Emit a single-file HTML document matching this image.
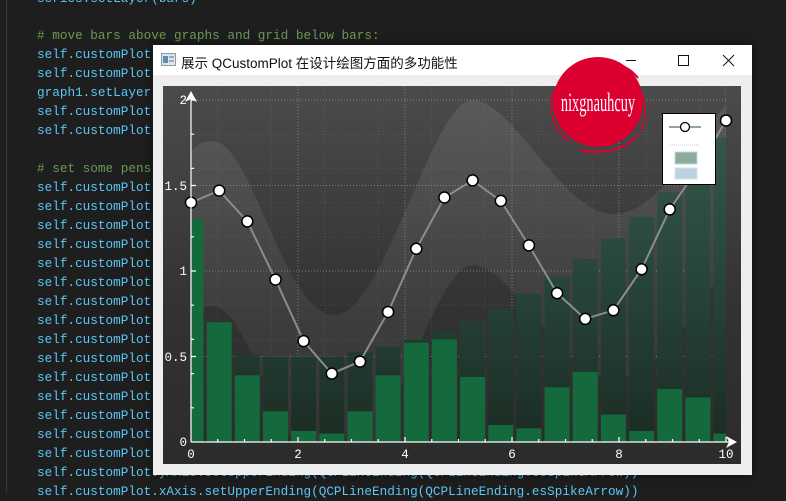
<!DOCTYPE html>
<html><head><meta charset="utf-8"><style>
html,body{margin:0;padding:0;}
body{width:786px;height:492px;background:#1e1e1e;position:relative;overflow:hidden;font-family:"Liberation Sans","Noto Sans CJK SC",sans-serif;}
.code{position:absolute;left:37px;font-family:"Liberation Mono",monospace;font-size:12.7px;line-height:19px;color:#5cc6f5;white-space:pre;}
.c{color:#6a9955}
.gut{position:absolute;left:6px;top:0;width:1px;height:492px;background:#3a3a3a}
.win{position:absolute;left:153px;top:45px;width:599px;height:430px;background:#eeeeee;box-shadow:0 0 8px rgba(0,0,0,.6)}
.tb{position:absolute;left:0;top:0;width:599px;height:30px;background:#fff}
.title{position:absolute;left:28px;top:7px;font-size:13.5px;color:#111}
</style></head><body>
<div class="gut"></div>
<div class="code" style="top:-11px">series.setLayer(bars)</div>
<div class="code" style="top:26px"><span class="c"># move bars above graphs and grid below bars:</span>
self.customPlot
self.customPlot
graph1.setLayer
self.customPlot
self.customPlot

<span class="c"># set some pens</span>
self.customPlot
self.customPlot
self.customPlot
self.customPlot
self.customPlot
self.customPlot
self.customPlot
self.customPlot
self.customPlot
self.customPlot
self.customPlot
self.customPlot
self.customPlot
self.customPlot
self.customPlot
self.customPlot.yAxis.setUpperEnding(QCPLineEnding(QCPLineEnding.esSpikeArrow))
self.customPlot.xAxis.setUpperEnding(QCPLineEnding(QCPLineEnding.esSpikeArrow))</div>

<div class="win">
 <div class="tb">
  <svg style="position:absolute;left:8px;top:8px" width="15" height="13"><rect x="0.5" y="0.5" width="14" height="12" fill="#dfe6ea" stroke="#8a9aa6"/><rect x="2" y="3" width="5" height="7" fill="#5b8fb0"/><rect x="8" y="3" width="5" height="2" fill="#9ab"/><rect x="8" y="7" width="5" height="2" fill="#9ab"/></svg>
  <div class="title">展示 QCustomPlot 在设计绘图方面的多功能性</div>
  <svg style="position:absolute;left:470px;top:8px" width="120" height="16">
   <line x1="3" y1="7.5" x2="13" y2="7.5" stroke="#111" stroke-width="1"/>
   <rect x="55.5" y="2.5" width="10" height="10" fill="none" stroke="#111"/>
   <line x1="100" y1="2" x2="111" y2="13" stroke="#111"/><line x1="111" y1="2" x2="100" y2="13" stroke="#111"/>
  </svg>
 </div>
</div>

<svg style="position:absolute;left:163px;top:86px" width="578" height="378" font-family="Liberation Mono, monospace" font-size="12.5">
<defs>
 <linearGradient id="bg" x1="0" y1="0" x2="0" y2="1"><stop offset="0" stop-color="#4b4b4b"/><stop offset="0.6" stop-color="#323232"/><stop offset="1" stop-color="#2c2c2c"/></linearGradient>
 <linearGradient id="bb" gradientUnits="userSpaceOnUse" x1="0" y1="40" x2="0" y2="356"><stop offset="0" stop-color="#36584a"/><stop offset="0.5" stop-color="#27443a"/><stop offset="1" stop-color="#1b2c23"/></linearGradient>
 <linearGradient id="bd" x1="0" y1="0" x2="0" y2="1"><stop offset="0" stop-color="#fff" stop-opacity="0.09"/><stop offset="1" stop-color="#fff" stop-opacity="0.03"/></linearGradient>
 <clipPath id="cp"><rect x="28" y="0" width="535" height="356"/></clipPath>
</defs>
<rect width="578" height="378" fill="url(#bg)"/>
<g clip-path="url(#cp)">
<path d="M28,65 C35,58 40,55 49,55 C90,55 120,229 172,229 C220,229 270,14 309,14 C350,14 400,128 450,128 C500,128 540,40 563,20 L563,185 C540,205 500,293 450,293 C400,293 350,179 309,179 C270,179 220,394 172,394 C120,394 90,220 49,220 C40,220 35,223 28,230 Z" fill="url(#bd)"/>
<g stroke="#8a8a8a" stroke-opacity="0.25" stroke-dasharray="1,2">
<path d="M54.75,0V356M108.25,0V356M161.75,0V356M215.25,0V356M268.75,0V356M322.25,0V356M375.75,0V356M429.25,0V356M482.75,0V356M536.25,0V356M28,48.2H563M28,82.4H563M28,116.6H563M28,150.8H563M28,219.2H563M28,253.4H563M28,287.6H563M28,321.8H563"/>
</g>
<g stroke="#aaaaaa" stroke-opacity="0.6" stroke-dasharray="1,2">
<path d="M135,0V356M242,0V356M349,0V356M456,0V356M563,0V356M28,14H563M28,99.5H563M28,185H563M28,270.5H563"/>
</g>
<g fill="url(#bb)">
<rect x="15.5" y="270.5" width="25" height="86"/><rect x="43.7" y="270.5" width="25" height="86"/><rect x="71.8" y="268.8" width="25" height="88"/><rect x="100" y="270.5" width="25" height="86"/><rect x="128.1" y="270.5" width="25" height="86"/><rect x="156.3" y="270.5" width="25" height="86"/><rect x="184.5" y="266.2" width="25" height="90"/><rect x="212.6" y="261.1" width="25" height="95"/><rect x="240.8" y="253.4" width="25" height="103"/><rect x="268.9" y="245.5" width="25" height="111"/><rect x="297.1" y="235.3" width="25" height="121"/><rect x="325.3" y="222.6" width="25" height="134"/><rect x="353.4" y="207.9" width="25" height="149"/><rect x="381.6" y="190.6" width="25" height="166"/><rect x="409.7" y="173" width="25" height="183"/><rect x="437.9" y="152.5" width="25" height="204"/><rect x="466.1" y="130.8" width="25" height="226"/><rect x="494.2" y="106.3" width="25" height="250"/><rect x="522.4" y="82.4" width="25" height="274"/><rect x="550.5" y="51.6" width="25" height="305"/>
</g>
<g fill="#156a3d">
<rect x="15.5" y="133.7" width="25" height="222.3"/><rect x="43.7" y="236.3" width="25" height="119.7"/><rect x="71.8" y="289.3" width="25" height="66.7"/><rect x="100" y="325.2" width="25" height="30.8"/><rect x="128.1" y="344.9" width="25" height="11.1"/><rect x="156.3" y="347.5" width="25" height="8.5"/><rect x="184.5" y="325.2" width="25" height="30.8"/><rect x="212.6" y="289.3" width="25" height="66.7"/><rect x="240.8" y="256.8" width="25" height="99.2"/><rect x="268.9" y="253.4" width="25" height="102.6"/><rect x="297.1" y="291" width="25" height="65"/><rect x="325.3" y="338.9" width="25" height="17.1"/><rect x="353.4" y="342.3" width="25" height="13.7"/><rect x="381.6" y="301.3" width="25" height="54.7"/><rect x="409.7" y="285.9" width="25" height="70.1"/><rect x="437.9" y="328.6" width="25" height="27.4"/><rect x="466.1" y="344.9" width="25" height="11.1"/><rect x="494.2" y="303" width="25" height="53"/><rect x="522.4" y="311.5" width="25" height="44.5"/><rect x="550.5" y="347.5" width="25" height="8.5"/>
</g>
</g>
<polyline fill="none" stroke="#8c8c8c" stroke-width="2" points="28,116.6 56.2,104.6 84.3,135.4 112.5,193.6 140.6,255.1 168.8,287.6 197,275.6 225.1,226 253.3,162.8 281.4,111.5 309.6,94.4 337.8,114.9 365.9,159.4 394.1,207.2 422.2,232.9 450.4,224.3 478.6,183.3 506.7,123.4 534.9,82.4 563,34.5"/>
<g fill="#fff" stroke="#000" stroke-width="1.5">
<circle cx="28" cy="116.6" r="5.5"/><circle cx="56.2" cy="104.6" r="5.5"/><circle cx="84.3" cy="135.4" r="5.5"/><circle cx="112.5" cy="193.6" r="5.5"/><circle cx="140.6" cy="255.1" r="5.5"/><circle cx="168.8" cy="287.6" r="5.5"/><circle cx="197" cy="275.6" r="5.5"/><circle cx="225.1" cy="226" r="5.5"/><circle cx="253.3" cy="162.8" r="5.5"/><circle cx="281.4" cy="111.5" r="5.5"/><circle cx="309.6" cy="94.4" r="5.5"/><circle cx="337.8" cy="114.9" r="5.5"/><circle cx="365.9" cy="159.4" r="5.5"/><circle cx="394.1" cy="207.2" r="5.5"/><circle cx="422.2" cy="232.9" r="5.5"/><circle cx="450.4" cy="224.3" r="5.5"/><circle cx="478.6" cy="183.3" r="5.5"/><circle cx="506.7" cy="123.4" r="5.5"/><circle cx="534.9" cy="82.4" r="5.5"/><circle cx="563" cy="34.5" r="5.5"/>
</g>
<g stroke="#fff" stroke-width="1.2">
<line x1="28" y1="356" x2="570" y2="356"/><line x1="28" y1="356" x2="28" y2="10"/>
<path d="M54.75,356v-3M81.5,356v-3M108.25,356v-3M161.75,356v-3M188.5,356v-3M215.25,356v-3M268.75,356v-3M295.5,356v-3M322.25,356v-3M375.75,356v-3M402.5,356v-3M429.25,356v-3M482.75,356v-3M509.5,356v-3M536.25,356v-3M135,356v-5M242,356v-5M349,356v-5M456,356v-5M563,356v-5"/>
<path d="M28,321.8h3M28,287.6h3M28,253.4h3M28,219.2h3M28,150.8h3M28,116.6h3M28,82.4h3M28,48.2h3M28,270.5h5M28,185h5M28,99.5h5M28,14h5"/>
</g>
<path d="M574,356 L563,350 L566,356 L563,362 Z" fill="#fff"/>
<path d="M28,5 L22,16 L28,13 L34,16 Z" fill="#fff"/>
<g fill="#fff">
<text x="28" y="372" text-anchor="middle">0</text><text x="135" y="372" text-anchor="middle">2</text><text x="242" y="372" text-anchor="middle">4</text><text x="349" y="372" text-anchor="middle">6</text><text x="456" y="372" text-anchor="middle">8</text><text x="563" y="372" text-anchor="middle">10</text>
<text x="24" y="360" text-anchor="end">0</text><text x="24" y="275" text-anchor="end">0.5</text><text x="24" y="189" text-anchor="end">1</text><text x="24" y="104" text-anchor="end">1.5</text><text x="24" y="18" text-anchor="end">2</text>
</g>
</svg>

<svg style="position:absolute;left:540px;top:50px" width="120" height="110">
<circle cx="58" cy="52" r="45" fill="#dc0030"/>
<path d="M20,30 C35,8 80,4 98,28" fill="none" stroke="#dc0030" stroke-width="2"/>
<path d="M14,40 C8,60 12,80 30,92" fill="none" stroke="#dc0030" stroke-width="1.5"/>
<path d="M40,100 C60,105 85,100 98,85" fill="none" stroke="#dc0030" stroke-width="2"/>
<path d="M100,40 C108,55 106,70 100,80" fill="none" stroke="#dc0030" stroke-width="1.5"/>
<text x="58" y="61" text-anchor="middle" fill="#fff" font-family="Liberation Serif, serif" font-size="26" transform="translate(58,0) scale(0.55,1) translate(-58,0)" textLength="135" lengthAdjust="spacingAndGlyphs">nixgnauhcuy</text>
</svg>

<div style="position:absolute;left:662px;top:113px;width:52px;height:70px;background:#fff;border:1px solid #000">
 <svg width="52" height="70">
  <line x1="6" y1="13" x2="38" y2="13" stroke="#8fa896" stroke-width="2"/>
  <circle cx="22" cy="13" r="4.5" fill="#fff" stroke="#000" stroke-width="1.3"/>
  <line x1="7" y1="31" x2="37" y2="31" stroke="#ccc" stroke-dasharray="1,1"/>
  <rect x="12" y="38" width="22" height="12" fill="#8fab9a" stroke="#b8dde0"/>
  <rect x="12" y="54" width="22" height="11" fill="#b9d4e0" stroke="#dde"/>
 </svg>
</div>
</body></html>
